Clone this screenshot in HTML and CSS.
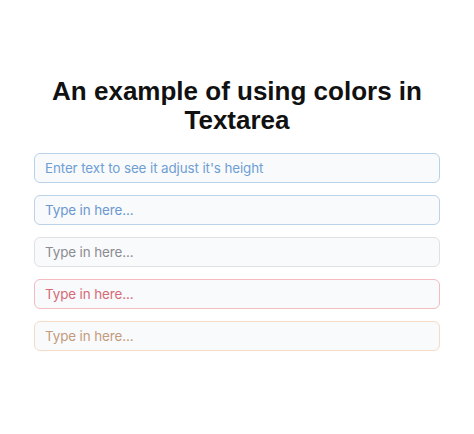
FILE: index.html
```html
<!DOCTYPE html>
<html>
<head>
<meta charset="utf-8">
<link rel="stylesheet" href="styles.css">
</head>
<body>
<main class="page">
  <h1 class="title">An example of using colors in Textarea</h1>
  <div class="stack">
    <textarea class="field field-primary" rows="1" placeholder="Enter text to see it adjust it's height"></textarea>
    <textarea class="field field-info" rows="1" placeholder="Type in here..."></textarea>
    <textarea class="field field-neutral" rows="1" placeholder="Type in here..."></textarea>
    <textarea class="field field-danger" rows="1" placeholder="Type in here..."></textarea>
    <textarea class="field field-warning" rows="1" placeholder="Type in here..."></textarea>
  </div>
</main>
</body>
</html>
```
FILE: styles.css
```css
html, body {
  margin: 0;
  padding: 0;
  background: #ffffff;
}
.page {
  width: 406px;
  margin: 0 auto;
  padding-top: 77px;
}
.title {
  margin: 0 0 18px;
  font-family: "Liberation Sans", Arial, sans-serif;
  font-weight: 700;
  font-size: 26px;
  line-height: 29px;
  text-align: center;
  color: #111;
}
.stack {
  display: flex;
  flex-direction: column;
  gap: 12px;
}
.field {
  display: block;
  box-sizing: border-box;
  width: 100%;
  height: 30px;
  margin: 0;
  padding: 5px 10px;
  border: 1px solid #c9d6e6;
  border-radius: 6px;
  background: #f9fafc;
  font-family: Inter, "Noto Sans", sans-serif;
  font-size: 13.4px;
  letter-spacing: -0.1px;
  line-height: 18px;
  resize: none;
  overflow: hidden;
  outline: none;
}
.field-primary { border-color: #b9d2ec; }
.field-primary::placeholder { color: #6f9fd3; }
.field-info { border-color: #bcd1ea; }
.field-info::placeholder { color: #6a98cf; }
.field-neutral { border-color: #e0e1e6; }
.field-neutral::placeholder { color: #8b8b90; }
.field-danger { border-color: #f2bcc0; }
.field-danger::placeholder { color: #d66a74; }
.field-warning { border-color: #f5dcc6; background: #f9fafb; }
.field-warning::placeholder { color: #c39a7c; }
```
